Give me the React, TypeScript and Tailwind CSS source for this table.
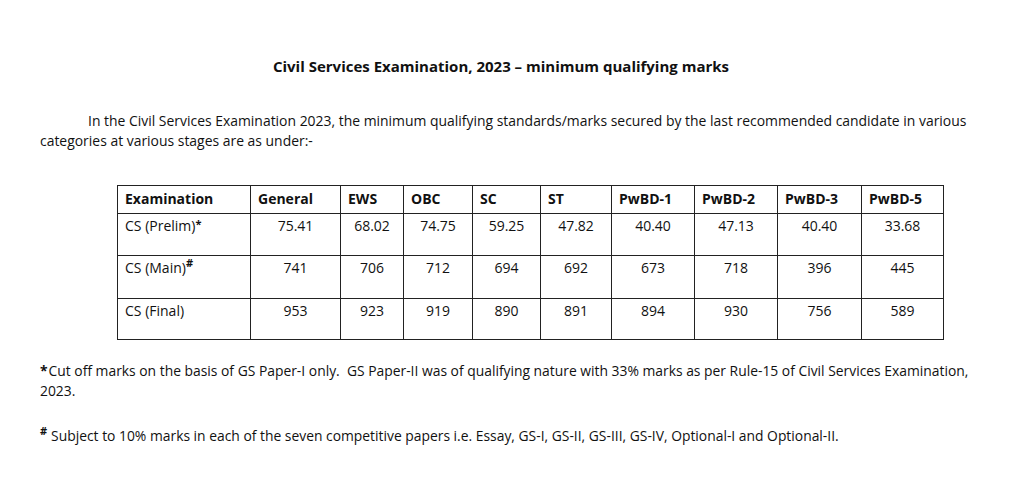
import React from "react";

const cols = [133, 90, 63, 69, 68, 71, 83, 83, 84, 82];
const headers = ["Examination", "General", "EWS", "OBC", "SC", "ST", "PwBD-1", "PwBD-2", "PwBD-3", "PwBD-5"];
const rows: { label: React.ReactNode; vals: string[]; h: string }[] = [
  {
    label: (
      <>
        CS (Prelim)<span className="font-bold relative -top-[3px] text-[11px]">*</span>
      </>
    ),
    vals: ["75.41", "68.02", "74.75", "59.25", "47.82", "40.40", "47.13", "40.40", "33.68"],
    h: "h-[42px]",
  },
  {
    label: (
      <>
        CS (Main)<span className="font-bold relative -top-[6px] text-[11px]">#</span>
      </>
    ),
    vals: ["741", "706", "712", "694", "692", "673", "718", "396", "445"],
    h: "h-[43px]",
  },
  {
    label: <>CS (Final)</>,
    vals: ["953", "923", "919", "890", "891", "894", "930", "756", "589"],
    h: "h-[41px]",
  },
];

export default function App() {
  return (
    <div
      className="w-[1024px] h-[491px] bg-white text-[#111] overflow-hidden"
      style={{ fontFamily: '"Open Sans", "Noto Sans", sans-serif' }}
    >
      <div className="pt-[56px] px-[40px]">
        <h1 className="text-center font-bold text-[15px] leading-[20px] pr-[22px]">
          Civil Services Examination, 2023 – minimum qualifying marks
        </h1>
        <p className="mt-[35px] text-[13.93px] leading-[20px] indent-[48px]">
          In the Civil Services Examination 2023, the minimum qualifying standards/marks secured by the last recommended candidate in various categories at various stages are as under:-
        </p>
        <div className="mt-[34px] pl-[77px]">
          <table className="border-collapse text-[14px] leading-[20px] table-fixed">
            <colgroup>
              {cols.map((w, i) => (
                <col key={i} style={{ width: w }} />
              ))}
            </colgroup>
            <thead>
              <tr className="h-[28px]">
                {headers.map((h) => (
                  <th key={h} className="border border-[#222] font-bold text-left align-top pl-[7px] pt-[3px]">
                    {h}
                  </th>
                ))}
              </tr>
            </thead>
            <tbody>
              {rows.map((r, i) => (
                <tr key={i} className={r.h}>
                  <td className="border border-[#222] align-top pl-[7px] pt-[2px]">{r.label}</td>
                  {r.vals.map((v, j) => (
                    <td key={j} className="border border-[#222] align-top text-center pt-[2px]">
                      {v}
                    </td>
                  ))}
                </tr>
              ))}
            </tbody>
          </table>
        </div>
        <p className="mt-[21px] text-[13.86px] leading-[20px]">
          <span className="font-bold mr-[1px]">*</span>
          <span>Cut off marks on the basis of GS Paper-I only.&nbsp; GS Paper-II was of qualifying nature with 33% marks as per Rule-15 of Civil Services Examination, 2023.</span>
        </p>
        <p className="mt-[25px] text-[13.86px] leading-[20px]">
          <span className="font-bold relative -top-[6px] text-[11px] mr-[4px]">#</span>
          <span>Subject to 10% marks in each of the seven competitive papers i.e. Essay, GS-I, GS-II, GS-III, GS-IV, Optional-I and Optional-II.</span>
        </p>
      </div>
    </div>
  );
}
